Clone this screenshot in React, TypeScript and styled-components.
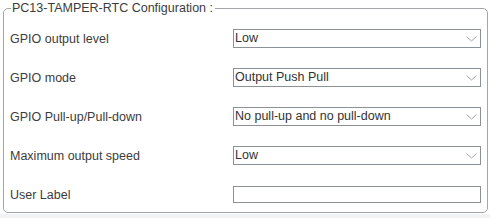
import React from "react";
import styled, { createGlobalStyle } from "styled-components";

const Global = createGlobalStyle`
  html, body { margin: 0; padding: 0; background: #ffffff; }
  body { font-family: "Liberation Sans", Arial, sans-serif; }
`;

const Page = styled.div`
  width: 490px;
  height: 218px;
  display: flex;
  flex-direction: column;
  background: #ffffff;
`;

const Panel = styled.fieldset`
  box-sizing: border-box;
  margin: 0 2px 0 3px;
  width: 485px;
  height: 213px;
  min-width: 0;
  padding: 12px 6px 0 6px;
  border: 1px solid #a3a6a9;
  border-radius: 5px;
  display: flex;
  flex-direction: column;
  gap: 20px;
`;

const Legend = styled.legend`
  font-family: "Liberation Sans", Arial, sans-serif;
  font-size: 12.5px;
  line-height: 17px;
  color: #3c3c3c;
  padding: 0 2px 0 1px;
  margin-left: 1px;
`;

const Row = styled.div`
  display: grid;
  grid-template-columns: 223px 248px;
  align-items: center;
  height: 19px;
`;

const Label = styled.span`
  font-size: 12.5px;
  color: #3c3c3c;
  white-space: nowrap;
`;

const Select = styled.div`
  box-sizing: border-box;
  height: 19px;
  border: 1px solid #8c9196;
  display: flex;
  align-items: center;
  justify-content: space-between;
  padding: 0 3px 0 1px;
  font-size: 12.5px;
  color: #333333;
  background: #ffffff;
`;

const Value = styled.span`
  white-space: nowrap;
  line-height: 17px;
`;

const TextInput = styled.div`
  box-sizing: border-box;
  height: 17px;
  border: 1px solid #8c9196;
  background: #ffffff;
`;

const Footer = styled.div`
  margin-top: 1px;
  flex: 1;
  background: #f2f3f4;
`;

const Chevron = () => (
  <svg width="11" height="6" viewBox="0 0 11 6">
    <path d="M0.5 0.5 L5.5 5 L10.5 0.5" fill="none" stroke="#a0a4a8" strokeWidth="1" />
  </svg>
);

const rows: { label: string; value?: string }[] = [
  { label: "GPIO output level", value: "Low" },
  { label: "GPIO mode", value: "Output Push Pull" },
  { label: "GPIO Pull-up/Pull-down", value: "No pull-up and no pull-down" },
  { label: "Maximum output speed", value: "Low" },
  { label: "User Label" },
];

export default function App() {
  return (
    <Page>
      <Global />
      <Panel>
        <Legend>PC13-TAMPER-RTC Configuration :</Legend>
        {rows.map((r) => (
          <Row key={r.label}>
            <Label>{r.label}</Label>
            {r.value !== undefined ? (
              <Select>
                <Value>{r.value}</Value>
                <Chevron />
              </Select>
            ) : (
              <TextInput />
            )}
          </Row>
        ))}
      </Panel>
      <Footer />
    </Page>
  );
}
